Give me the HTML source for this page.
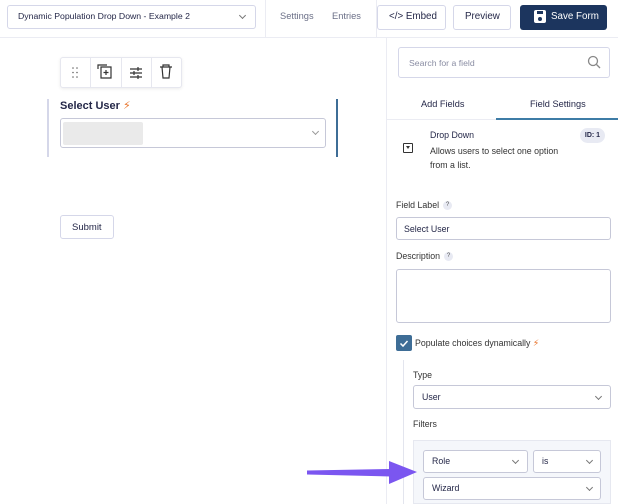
<!DOCTYPE html><html><head><style>
*{box-sizing:border-box;margin:0;padding:0}
body{width:618px;height:504px;overflow:hidden;background:#fff;font-family:"Liberation Sans",sans-serif;color:#242748;position:relative;font-size:9px}
.a{position:absolute}
.box{position:absolute;border:1px solid #d5d7e9;border-radius:3px;background:#fff}
.chev{position:absolute;width:5px;height:5px;border-right:1px solid #777;border-bottom:1px solid #777;transform:rotate(45deg)}
.lbl{position:absolute;font-size:8.8px;color:#333}
.q{display:inline-block;width:9px;height:9px;border-radius:50%;background:#e8eaf3;font-size:6px;text-align:center;line-height:9px;margin-left:4px;vertical-align:middle;color:#555}
</style></head><body>
<div class="a" style="left:0;top:0;width:618px;height:38px;border-bottom:1px solid #ebecf3"></div>
<div class="box" style="left:7px;top:5px;width:249px;height:24px"></div>
<div class="a" style="left:18px;top:11px;font-size:8.7px;color:#242748">Dynamic Population Drop Down - Example 2</div>
<div class="chev" style="left:240px;top:13px"></div>
<div class="a" style="left:265px;top:0;width:1px;height:38px;background:#ebecf3"></div>
<div class="a" style="left:376px;top:0;width:1px;height:38px;background:#ebecf3"></div>
<div class="a" style="left:280px;top:11px;font-size:9.3px;color:#6b6f87">Settings</div>
<div class="a" style="left:332px;top:11px;font-size:9.3px;color:#6b6f87">Entries</div>
<div class="box" style="left:377px;top:5px;width:69px;height:25px"></div>
<div class="a" style="left:389px;top:11px;font-size:9.8px;color:#242748">&lt;/&gt; Embed</div>
<div class="box" style="left:453px;top:5px;width:58px;height:25px"></div>
<div class="a" style="left:465px;top:11px;font-size:9.8px;color:#242748">Preview</div>
<div class="a" style="left:520px;top:5px;width:87px;height:25px;background:#1c355e;border-radius:3px"></div>
<div class="a" style="left:534px;top:10px;width:12px;height:13px;background:#fff;border-radius:2px"></div>
<div class="a" style="left:537px;top:11px;width:6px;height:3px;background:#1c355e"></div>
<div class="a" style="left:538px;top:17px;width:4px;height:4px;background:#1c355e;border-radius:50%"></div>
<div class="a" style="left:551px;top:11px;font-size:9.8px;color:#fff">Save Form</div>
<div class="a" style="left:60px;top:57px;width:122px;height:31px;border:1px solid #e6e7ef;border-radius:3px;box-shadow:0 1px 3px rgba(0,0,0,.08);background:#fff"></div>
<div class="a" style="left:90px;top:57px;width:1px;height:31px;background:#e6e7ef"></div>
<div class="a" style="left:121px;top:57px;width:1px;height:31px;background:#e6e7ef"></div>
<div class="a" style="left:151px;top:57px;width:1px;height:31px;background:#e6e7ef"></div>
<svg class="a" style="left:60px;top:57px" width="122" height="31" fill="none" stroke="#333" stroke-width="1.2">
<g fill="#666" stroke="none"><circle cx="13" cy="11" r=".8"/><circle cx="17" cy="11" r=".8"/><circle cx="13" cy="15.5" r=".8"/><circle cx="17" cy="15.5" r=".8"/><circle cx="13" cy="20" r=".8"/><circle cx="17" cy="20" r=".8"/></g>
<path d="M38 12v-4h9M41 10h10v11H41z M46 13v5M43.5 15.5h5"/>
<path d="M70 12h12M70 16h12M70 20h12M78 10v4M74 14v4M78 18v4"/>
<path d="M100 10h12M103 10v-2h6v2M102 10l1 11h6l1-11"/>
</svg>
<div class="a" style="left:47px;top:99px;width:2px;height:58px;background:#d5d7e9"></div>
<div class="a" style="left:336px;top:99px;width:2px;height:58px;background:#3e6d96"></div>
<div class="a" style="left:60px;top:99px;font-size:11px;font-weight:bold;color:#242748">Select User <span style="color:#e8742c;font-weight:normal">&#9889;&#xFE0E;</span></div>
<div class="box" style="left:60px;top:118px;width:266px;height:30px;border-color:#c6c8d8"></div>
<div class="a" style="left:63px;top:122px;width:80px;height:23px;background:#eaeaea;border-radius:2px"></div>
<div class="chev" style="left:313px;top:129px;border-color:#999"></div>
<div class="box" style="left:60px;top:215px;width:54px;height:24px"></div>
<div class="a" style="left:72px;top:222px;font-size:9.5px">Submit</div>
<div class="a" style="left:386px;top:38px;width:1px;height:466px;background:#ebecf3"></div>
<div class="box" style="left:398px;top:47px;width:212px;height:31px"></div>
<div class="a" style="left:409px;top:58px;font-size:8.7px;color:#8a8da3">Search for a field</div>
<svg class="a" style="left:587px;top:55px" width="14" height="14" fill="none" stroke="#888" stroke-width="1.3"><circle cx="6" cy="6" r="4.5"/><path d="M9.5 9.5l3.5 3.5"/></svg>
<div class="a" style="left:421px;top:99px;font-size:9.2px">Add Fields</div>
<div class="a" style="left:530px;top:99px;font-size:9.2px">Field Settings</div>
<div class="a" style="left:387px;top:119px;width:231px;height:1px;background:#ebecf3"></div>
<div class="a" style="left:496px;top:118px;width:122px;height:2px;background:#3e7ca6"></div>
<div class="a" style="left:430px;top:130px;font-size:8.8px">Drop Down</div>
<div class="a" style="left:430px;top:144px;font-size:8.8px;line-height:14px;color:#333">Allows users to select one option<br>from a list.</div>
<div class="a" style="left:403px;top:143px;width:10px;height:10px;border:1.3px solid #333;border-radius:1px"></div>
<div class="a" style="left:406px;top:146px;width:0;height:0;border-left:2.5px solid transparent;border-right:2.5px solid transparent;border-top:3px solid #333"></div>
<div class="a" style="left:580px;top:128px;width:25px;height:15px;border-radius:8px;background:#e8eaf3;font-size:7px;text-align:center;line-height:15px;font-weight:bold">ID: 1</div>
<div class="lbl" style="left:396px;top:200px">Field Label<span class="q">?</span></div>
<div class="box" style="left:396px;top:217px;width:215px;height:23px;border-color:#c6c8d8"></div>
<div class="a" style="left:404px;top:224px;font-size:8.8px">Select User</div>
<div class="lbl" style="left:396px;top:251px">Description<span class="q">?</span></div>
<div class="box" style="left:396px;top:269px;width:215px;height:54px;border-color:#c6c8d8"></div>
<div class="a" style="left:396px;top:335px;width:16px;height:16px;background:#3e6d96;border-radius:2px"></div>
<svg class="a" style="left:396px;top:335px" width="16" height="16" fill="none" stroke="#fff" stroke-width="1.5"><path d="M4.5 8.5l2.5 2.5 4.5-5"/></svg>
<div class="a" style="left:415px;top:338px;font-size:8.8px;color:#333">Populate choices dynamically <span style="color:#e8742c">&#9889;&#xFE0E;</span></div>
<div class="a" style="left:403px;top:360px;width:1px;height:144px;background:#e3e5ee"></div>
<div class="lbl" style="left:413px;top:370px">Type</div>
<div class="box" style="left:413px;top:385px;width:198px;height:24px;border-color:#c6c8d8"></div>
<div class="a" style="left:422px;top:392px;font-size:8.8px">User</div>
<div class="chev" style="left:596px;top:394px"></div>
<div class="lbl" style="left:413px;top:419px">Filters</div>
<div class="a" style="left:413px;top:440px;width:198px;height:64px;background:#f5f7fb;border:1px solid #e6e8f0"></div>
<div class="box" style="left:423px;top:450px;width:105px;height:23px;border-color:#c6c8d8"></div>
<div class="a" style="left:432px;top:456px;font-size:8.8px">Role</div>
<div class="chev" style="left:513px;top:458px"></div>
<div class="box" style="left:533px;top:450px;width:68px;height:23px;border-color:#c6c8d8"></div>
<div class="a" style="left:542px;top:456px;font-size:8.8px">is</div>
<div class="chev" style="left:587px;top:458px"></div>
<div class="box" style="left:423px;top:477px;width:178px;height:23px;border-color:#c6c8d8"></div>
<div class="a" style="left:432px;top:483px;font-size:8.8px">Wizard</div>
<div class="chev" style="left:587px;top:485px"></div>
<svg class="a" style="left:300px;top:455px" width="125" height="35"><path d="M7 15.5 L91 14 L91 21.5 L7 19.5 Z" fill="#7b56f0"/><path d="M89 6 L117 17 L89 29 Z" fill="#7b56f0"/></svg>
</body></html>
